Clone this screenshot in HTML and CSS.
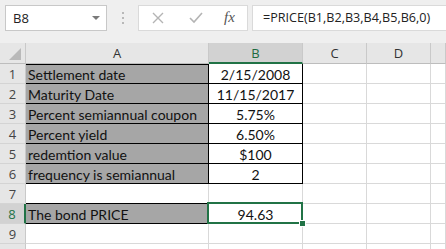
FILE: index.html
```html
<!DOCTYPE html>
<html lang="en">
<head>
    <meta charset="UTF-8">
    <title>PRICE</title>
    <link rel="stylesheet" href="styles.css">
</head>
<body>

<div class="formula-row">
    <div class="name-box">
        <span>B8</span>
        <span class="caret"></span>
    </div>
    <div class="grip">
        <span></span><span></span><span></span>
    </div>
    <div class="fx-buttons">
        <svg class="btn" width="12" height="12" viewBox="0 0 12 12">
            <path d="M1 1 L11 11 M11 1 L1 11" stroke="#b4b4b4" stroke-width="1.4" fill="none"/>
        </svg>
        <svg class="btn" width="14" height="12" viewBox="0 0 14 12">
            <path d="M1 6 L5 10 L13 1" stroke="#b4b4b4" stroke-width="1.6" fill="none"/>
        </svg>
        <span class="fx">fx</span>
    </div>
    <div class="formula">=PRICE(B1,B2,B3,B4,B5,B6,0)</div>
</div>

<div class="sheet">
    <div class="hd corner"><span class="tri"></span></div>
    <div class="hd">A</div>
    <div class="hd sel-col">B</div>
    <div class="hd">C</div>
    <div class="hd">D</div>
    <div class="hd"></div>

    <div class="rh">1</div>
    <div class="c lbl">Settlement date</div>
    <div class="c val">2/15/2008</div>
    <div class="c"></div><div class="c"></div><div class="c"></div>

    <div class="rh">2</div>
    <div class="c lbl">Maturity Date</div>
    <div class="c val">11/15/2017</div>
    <div class="c"></div><div class="c"></div><div class="c"></div>

    <div class="rh">3</div>
    <div class="c lbl">Percent semiannual coupon</div>
    <div class="c val">5.75%</div>
    <div class="c"></div><div class="c"></div><div class="c"></div>

    <div class="rh">4</div>
    <div class="c lbl">Percent yield</div>
    <div class="c val">6.50%</div>
    <div class="c"></div><div class="c"></div><div class="c"></div>

    <div class="rh">5</div>
    <div class="c lbl">redemtion value</div>
    <div class="c val">$100</div>
    <div class="c"></div><div class="c"></div><div class="c"></div>

    <div class="rh">6</div>
    <div class="c lbl">frequency is semiannual</div>
    <div class="c val">2</div>
    <div class="c"></div><div class="c"></div><div class="c"></div>

    <div class="rh">7</div>
    <div class="c"></div>
    <div class="c top-b"></div>
    <div class="c"></div><div class="c"></div><div class="c"></div>

    <div class="rh sel-row">8</div>
    <div class="c lbl">The bond PRICE</div>
    <div class="c active">94.63<span class="handle"></span></div>
    <div class="c"></div><div class="c"></div><div class="c"></div>

    <div class="rh">9</div>
    <div class="c"></div><div class="c"></div><div class="c"></div><div class="c"></div><div class="c"></div>

    <div class="rh"></div>
    <div class="c"></div><div class="c"></div><div class="c"></div><div class="c"></div><div class="c"></div>
</div>

</body>
</html>
```

FILE: styles.css
```css
body {
    margin: 0;
    background-color: #fff;
    font-family: Lato, "Liberation Sans", sans-serif;
    overflow: hidden;
}

.formula-row {
    display: flex;
    align-items: center;
    height: 43px;
    padding: 0 0 0 5px;
    background-color: #efefef;
    box-sizing: border-box;
}

.name-box {
    display: flex;
    align-items: center;
    justify-content: space-between;
    width: 102px;
    height: 26px;
    margin-top: -8px;
    padding: 0 6px 0 7px;
    box-sizing: border-box;
    background-color: #fff;
    border: 1px solid #c8c8c8;
    font-family: "Open Sans", sans-serif;
    font-size: 13px;
    color: #222;
}

.caret {
    width: 0;
    height: 0;
    border-left: 4px solid transparent;
    border-right: 4px solid transparent;
    border-top: 4px solid #7a7a7a;
}

.grip {
    display: flex;
    flex-direction: column;
    gap: 3px;
    margin: -8px 14px 0 15px;
}

.grip span {
    width: 2px;
    height: 2px;
    background-color: #b8b8b8;
}

.fx-buttons {
    display: flex;
    align-items: center;
    width: 110px;
    height: 26px;
    margin-top: -8px;
    padding-left: 13px;
    box-sizing: border-box;
    background-color: #fff;
    border: 1px solid #dadada;
}

.btn {
    margin-right: 25px;
}

.btn + .btn {
    margin-right: 21px;
}

.fx {
    font-family: "Liberation Serif", serif;
    font-style: italic;
    font-size: 15px;
    color: #555;
}

.formula {
    flex: 1;
    height: 26px;
    margin: -8px 0 0 4px;
    padding-left: 10px;
    box-sizing: border-box;
    background-color: #fff;
    border: 1px solid #dadada;
    border-right: none;
    font-family: "Open Sans", sans-serif;
    font-size: 12.6px;
    line-height: 24px;
    color: #222;
    white-space: nowrap;
}

.sheet {
    display: grid;
    grid-template-columns: 26px 183px 94px 64px 64px 1fr;
    grid-auto-rows: 20px;
    grid-template-rows: 21px;
}

.hd {
    display: flex;
    align-items: center;
    justify-content: center;
    background-color: #e6e6e6;
    border-right: 1px solid #c9c9c9;
    border-bottom: 1px solid #bdbdbd;
    font-family: "Open Sans", sans-serif;
    font-size: 13px;
    color: #333;
    box-sizing: border-box;
}

.corner {
    position: relative;
}

.tri {
    position: absolute;
    right: 4px;
    bottom: 3px;
    width: 0;
    height: 0;
    border-left: 12px solid transparent;
    border-bottom: 12px solid #b9b9b9;
}

.sel-col {
    background-color: #d2d2d2;
    color: #1e6b41;
    border-bottom: 2px solid #217346;
}

.rh {
    display: flex;
    align-items: center;
    justify-content: center;
    background-color: #e6e6e6;
    border-right: 1px solid #c9c9c9;
    border-bottom: 1px solid #d4d4d4;
    font-family: "Open Sans", sans-serif;
    font-size: 13px;
    color: #444;
    box-sizing: border-box;
}

.sel-row {
    background-color: #d2d2d2;
    color: #217346;
    border-right: 2px solid #217346;
}

.c {
    display: flex;
    align-items: center;
    padding-top: 1px;
    border-right: 1px solid #d9d9d9;
    border-bottom: 1px solid #d9d9d9;
    font-size: 14px;
    color: #111;
    white-space: nowrap;
    box-sizing: border-box;
}

.lbl {
    padding-left: 2px;
    background-color: #a6a6a6;
    border-right-color: #000;
    border-bottom-color: #000;
}

.val {
    justify-content: center;
    border-right-color: #000;
    border-bottom-color: #000;
}

.sheet > .c:nth-child(8),
.sheet > .c:nth-child(7) {
    border-top: 1px solid #000;
}

.top-b {
    border-bottom-color: #000;
}

.sheet > .rh.sel-row + .lbl {
    border-top: 1px solid #000;
    margin-top: -1px;
}

.active {
    position: relative;
    justify-content: center;
}

.active::before {
    content: "";
    position: absolute;
    left: -2px;
    top: -2px;
    right: -1px;
    bottom: -1px;
    border: 2px solid #217346;
}

.handle {
    position: absolute;
    right: -4px;
    bottom: -4px;
    width: 5px;
    height: 5px;
    background-color: #217346;
    border: 1px solid #fff;
}
```
